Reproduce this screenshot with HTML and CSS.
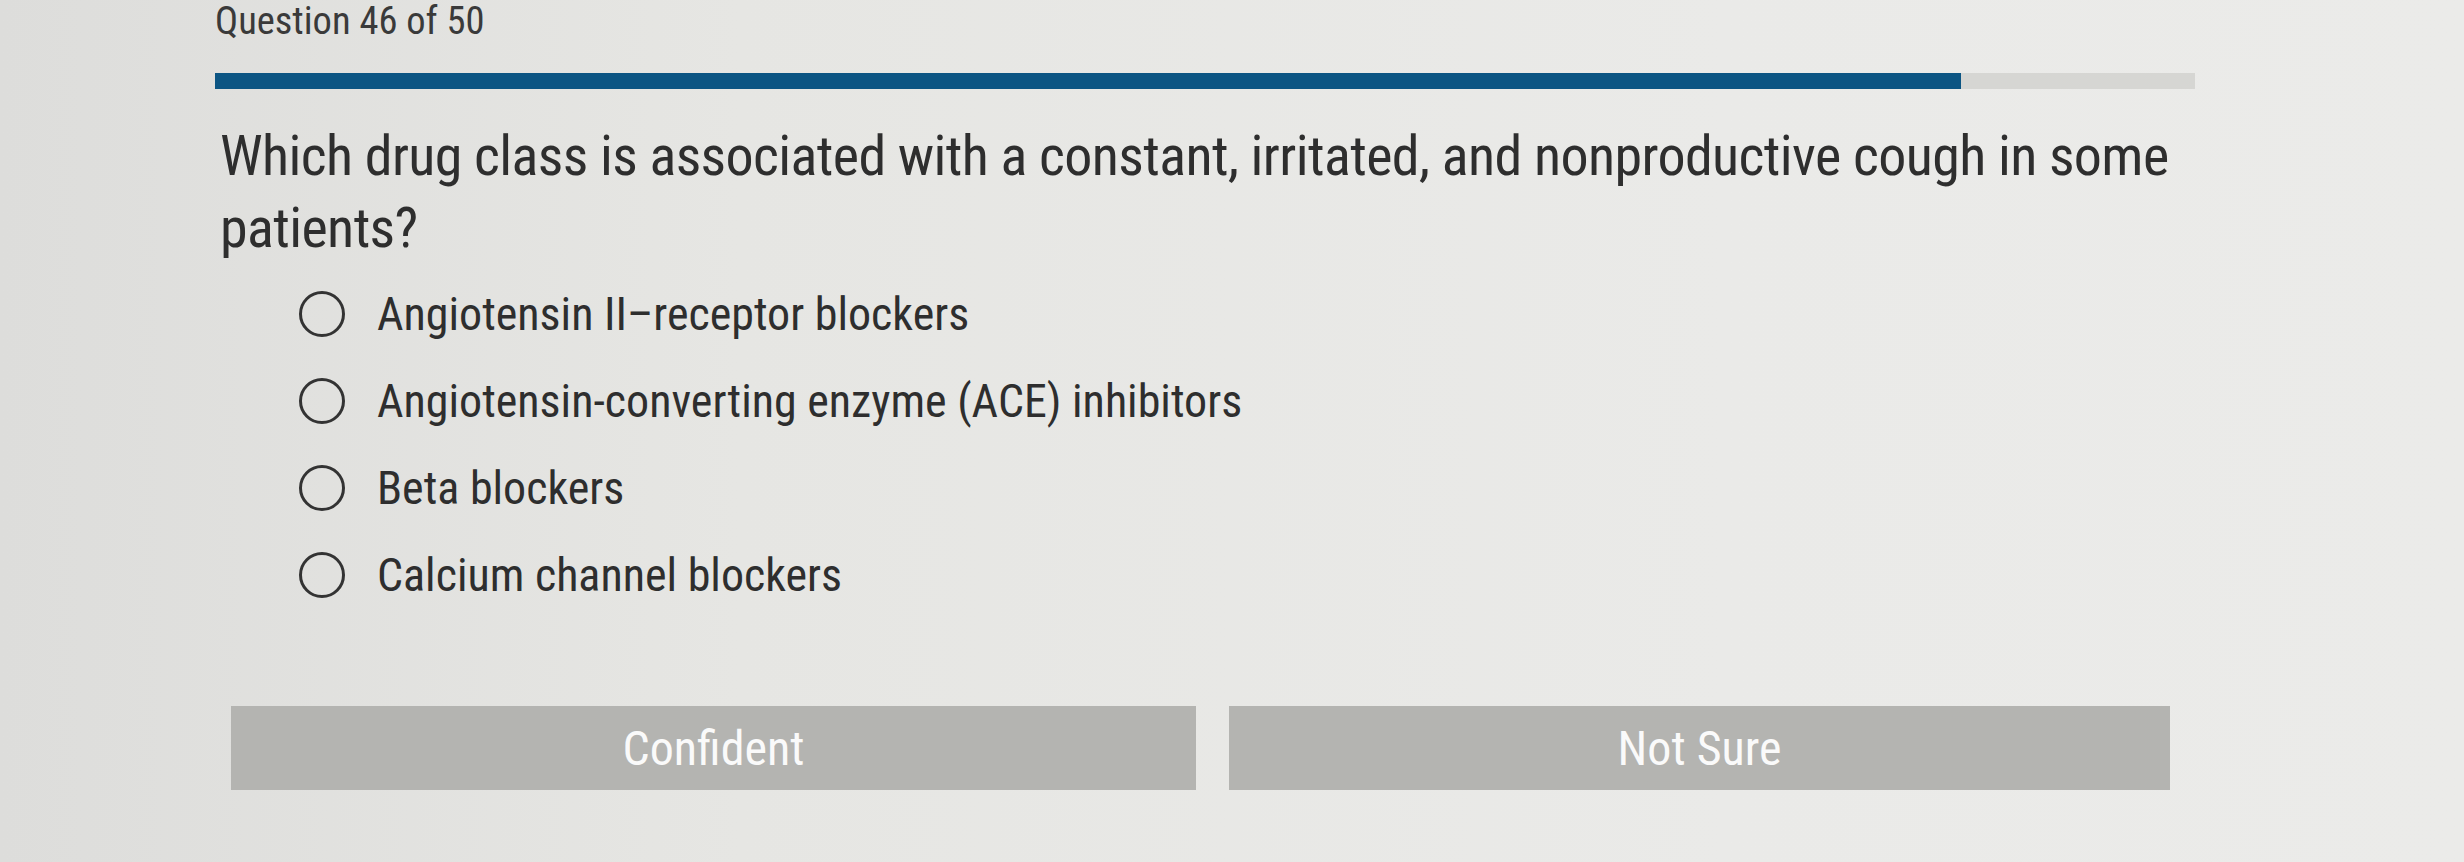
FILE: index.html
```html
<!DOCTYPE html>
<html lang="en">
<head>
    <meta charset="UTF-8">
    <meta name="viewport" content="width=device-width, initial-scale=1.0">
    <title>Question 46 of 50</title>
    <link rel="stylesheet" href="styles.css">
</head>
<body>
    <div class="quiz">
        <!-- Header with progress -->
        <div class="quiz-count">Question 46 of 50</div>
        <div class="progress">
            <div class="progress-fill" style="width: 88.2%"></div>
        </div>

        <!-- Question -->
        <p class="question">Which drug class is associated with a constant, irritated, and nonproductive cough in some patients?</p>

        <ul class="options">
            <li class="option"><span class="radio"></span><span class="option-text">Angiotensin II–receptor blockers</span></li>
            <li class="option"><span class="radio"></span><span class="option-text">Angiotensin-converting enzyme (ACE) inhibitors</span></li>
            <li class="option"><span class="radio"></span><span class="option-text">Beta blockers</span></li>
            <li class="option"><span class="radio"></span><span class="option-text">Calcium channel blockers</span></li>
        </ul>

        <!-- Confidence buttons -->
        <div class="actions">
            <button class="btn btn-confident">Confident</button>
            <button class="btn btn-unsure">Not Sure</button>
        </div>
    </div>
</body>
</html>
```

FILE: styles.css
```css
/* Theme colors */
:root {
    --color-text: #2e2e2e;
    --color-muted: #3a3a3a;
    --color-progress: #0c5583;
    --color-track: #d6d6d3;
    --color-button: #b4b4b1;
}

* {
    margin: 0;
    padding: 0;
    box-sizing: border-box;
}

body {
    font-family: "Liberation Sans Narrow", "Arial Narrow", "Roboto Condensed", "DejaVu Sans Condensed", sans-serif;
    background: linear-gradient(90deg, #dddddb 0%, #e6e6e3 30%, #eaeae8 70%, #ebebe9 100%);
    color: var(--color-text);
    width: 2464px;
    height: 862px;
    overflow: hidden;
}

.quiz {
    margin-left: 215px;
    width: 1980px;
}

.quiz-count {
    font-size: 38.5px;
    line-height: 42px;
    color: var(--color-muted);
}

/* Progress bar */
.progress {
    margin-top: 31px;
    height: 16px;
    background: var(--color-track);
}

.progress-fill {
    height: 100%;
    background: var(--color-progress);
}

.question {
    margin-top: 31px;
    padding-left: 5px;
    font-size: 56px;
    letter-spacing: -0.6px;
    line-height: 72px;
    max-width: 1990px;
}

/* Answer options */
.options {
    list-style: none;
    margin-top: 6px;
    padding-left: 84px;
}

.option {
    display: flex;
    align-items: center;
    height: 87px;
    gap: 32px;
    font-size: 46px;
    line-height: 56px;
}

.radio {
    width: 46px;
    height: 46px;
    border: 3.5px solid #333;
    border-radius: 50%;
    flex-shrink: 0;
}

/* Buttons */
.actions {
    display: flex;
    gap: 33px;
    margin: 88px 25px 0 16px;
}

.btn {
    height: 84px;
    border: none;
    background: var(--color-button);
    color: #fafafa;
    font-family: inherit;
    font-size: 48px;
}

.btn-confident {
    flex: 965;
}

.btn-unsure {
    flex: 941;
}
```
